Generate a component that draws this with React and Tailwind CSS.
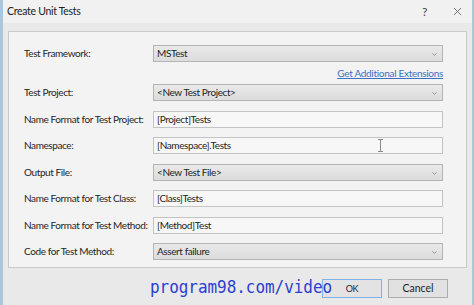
import { ChevronDown, X } from "lucide-react";

const rows = [
  { label: "Test Framework:", value: "MSTest", kind: "select", link: true },
  { label: "Test Project:", value: "<New Test Project>", kind: "select" },
  { label: "Name Format for Test Project:", value: "[Project]Tests", kind: "text" },
  { label: "Namespace:", value: "[Namespace].Tests", kind: "text", cursor: true },
  { label: "Output File:", value: "<New Test File>", kind: "select" },
  { label: "Name Format for Test Class:", value: "[Class]Tests", kind: "text" },
  { label: "Name Format for Test Method:", value: "[Method]Test", kind: "text" },
  { label: "Code for Test Method:", value: "Assert failure", kind: "select" },
];

function Field({ row }) {
  if (row.kind === "select") {
    return (
      <div className="relative flex h-[17px] w-[290px] items-center border border-[#b4b4b4] bg-gradient-to-b from-[#e9e9e9] to-[#dcdcdc] pl-[3px] text-[#1e1e1e]">
        <span>{row.value}</span>
        <ChevronDown className="absolute right-[4px] top-[5px] h-[7px] w-[7px] text-[#8a8a8a]" strokeWidth={3} />
      </div>
    );
  }
  return (
    <div className="relative flex h-[17px] w-[290px] items-center border border-[#c4c4c4] bg-[#f7f7f7] pl-[3px] text-[#1e1e1e]">
      <span>{row.value}</span>
      {row.cursor && (
        <span className="absolute left-[224px] top-[1px] flex h-[13px] w-[5px] flex-col items-center justify-between">
          <span className="h-px w-[5px] bg-[#888]" />
          <span className="w-px flex-1 bg-[#888]" />
          <span className="h-px w-[5px] bg-[#888]" />
        </span>
      )}
    </div>
  );
}

export default function App() {
  return (
    <div
      className="flex h-[305px] w-[474px] flex-col overflow-hidden border-l-[3px] border-r-[2px] border-[#a9c7df] bg-[#e9e9e9] text-[10px] tracking-[-0.4px] text-[#1e1e1e]"
      style={{ fontFamily: 'Lato, "Noto Sans", sans-serif' }}
    >
      <div className="flex h-[23px] items-center bg-[#f1f1f1] pl-[4px] pr-[8px]">
        <span className="flex-1 text-[10.5px] tracking-[-0.3px] text-[#222]">Create Unit Tests</span>
        <span className="mr-[24px] text-[12px] text-[#444]">?</span>
        <X className="h-[13px] w-[13px] text-[#555]" strokeWidth={1.5} />
      </div>

      <div className="mx-[5px] mt-[8px] flex h-[237px] flex-col border border-[#c9c9c9] bg-[#f3f3f3] pl-[15px] pt-[13px]">
        {rows.map((row) => (
          <div key={row.label} className="flex flex-col">
            <div className="flex h-[17px] items-center">
              <span className="w-[129px] whitespace-nowrap">{row.label}</span>
              <Field row={row} />
            </div>
            {row.link ? (
              <div className="flex h-[22px] w-[419px] items-center justify-end">
                <span className="text-[10px] tracking-[-0.3px] text-[#3b6fc4] underline">Get Additional Extensions</span>
              </div>
            ) : (
              <div className="h-[9.5px]" />
            )}
          </div>
        ))}
      </div>

      <div className="relative flex flex-1 items-start justify-end pr-[24px] pt-[11px]">
        <span
          className="absolute left-[147px] top-[10px] origin-top scale-y-115 text-[16px] leading-none tracking-[-0.05px] text-[#2b3fcf]"
          style={{ fontFamily: '"DejaVu Sans Mono", monospace' }}
        >
          program98.com/video
        </span>
        <div className="flex gap-[6px]">
          <div className="flex h-[19px] w-[60px] items-center justify-center border border-[#7eb4ea] bg-[#e3e3e3] text-[9px]">
            OK
          </div>
          <div className="flex h-[19px] w-[60px] items-center justify-center border border-[#adadad] bg-[#e1e1e1] text-[10.5px] tracking-normal">
            Cancel
          </div>
        </div>
      </div>
    </div>
  );
}
